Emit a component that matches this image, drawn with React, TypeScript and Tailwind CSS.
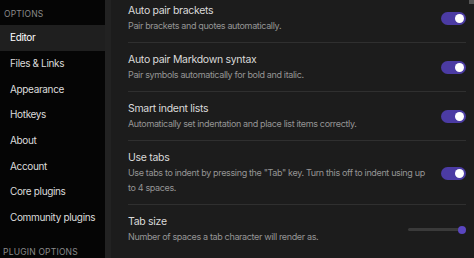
import React from "react";

const Toggle = () => (
  <div className="w-[25px] h-[13px] rounded-full bg-[#4b3ba3] flex items-center justify-end pr-[2px] shrink-0">
    <div className="w-[9px] h-[9px] rounded-full bg-white" />
  </div>
);

const Row = ({ title, desc, first, control }: { title: string; desc: React.ReactNode; first?: boolean; control: React.ReactNode }) => (
  <div className={`flex items-center ${first ? "pt-[4px]" : "pt-[10px] border-t border-[#2f2f2f]"} pb-[9px]`}>
    <div className="flex-1 min-w-0">
      <div className="text-[10.5px] leading-[14px] tracking-[-0.3px] text-[#dadada]">{title}</div>
      <div className="text-[9px] leading-[15px] tracking-[-0.35px] text-[#959595]">{desc}</div>
    </div>
    <div className="ml-3 flex items-center">{control}</div>
  </div>
);

export default function App() {
  const items = ["Editor", "Files & Links", "Appearance", "Hotkeys", "About", "Account", "Core plugins", "Community plugins"];
  return (
    <div className="w-[474px] h-[258px] flex overflow-hidden bg-[#1c1c1c] relative" style={{ fontFamily: "Inter, 'Noto Sans', sans-serif" }}>
      <div className="w-[105px] h-full bg-[#050505] flex flex-col shrink-0">
        <div className="h-[25px] pt-[9px] pl-[4px] text-[8.5px] leading-[10px] tracking-[0.2px] text-[#8a8a8a]">OPTIONS</div>
        {items.map((it, i) => (
          <div key={it} className={`h-[25.7px] flex items-center pl-[10px] whitespace-nowrap text-[10px] tracking-[-0.35px] ${i === 0 ? "bg-[#1f1f1f] text-white" : "text-[#dcdcdc]"}`}>
            {it}
          </div>
        ))}
        <div className="pt-[16px] pl-[3px] text-[8.5px] leading-[10px] tracking-[0.2px] text-[#8a8a8a] whitespace-nowrap">PLUGIN OPTIONS</div>
      </div>
      <div className="w-[6px] h-full bg-[#222222] shrink-0" />
      <div className="flex-1 pl-[17px] pr-[8px]">
        <Row first title="Auto pair brackets" desc="Pair brackets and quotes automatically." control={<Toggle />} />
        <Row title="Auto pair Markdown syntax" desc="Pair symbols automatically for bold and italic." control={<Toggle />} />
        <Row title="Smart indent lists" desc="Automatically set indentation and place list items correctly." control={<Toggle />} />
        <Row
          title="Use tabs"
          desc={<>Use tabs to indent by pressing the "Tab" key. Turn this off to indent using up to 4 spaces.</>}
          control={<Toggle />}
        />
        <Row
          title="Tab size"
          desc="Number of spaces a tab character will render as."
          control={
            <div className="relative w-[58px] h-[8px] flex items-center">
              <div className="w-full h-[3px] rounded-full bg-[#3a3a3a]" />
              <div className="absolute right-0 w-[8px] h-[8px] rounded-full bg-[#5a46c0]" />
            </div>
          }
        />
      </div>
      <div className="absolute right-0 top-0 w-[5px] h-[4px] bg-[#555]" />
    </div>
  );
}
